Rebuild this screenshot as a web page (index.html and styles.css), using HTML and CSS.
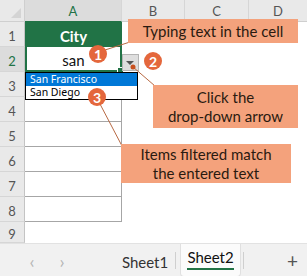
FILE: index.html
```
<!DOCTYPE html>
<html>
  <head>
    <link rel="stylesheet" href="styles.css">
  </head>
  <body>
    <div id="sheet">
      <div class="corner"><div class="cornerTri"></div></div>
      <div class="colHead selCol">A</div>
      <div class="colHead">B</div>
      <div class="colHead">C</div>
      <div class="colHead last">D</div>

      <div class="rowHead">1</div>
      <div class="cell tableHead">City</div>
      <div class="cell"></div><div class="cell"></div><div class="cell"></div>

      <div class="rowHead selRow">2</div>
      <div class="cell tableCell active">san<span class="fillHandle"></span></div>
      <div class="cell"></div><div class="cell"></div><div class="cell"></div>

      <div class="rowHead">3</div>
      <div class="cell tableCell"></div>
      <div class="cell"></div><div class="cell"></div><div class="cell"></div>

      <div class="rowHead">4</div>
      <div class="cell tableCell"></div>
      <div class="cell"></div><div class="cell"></div><div class="cell"></div>

      <div class="rowHead">5</div>
      <div class="cell tableCell"></div>
      <div class="cell"></div><div class="cell"></div><div class="cell"></div>

      <div class="rowHead">6</div>
      <div class="cell tableCell"></div>
      <div class="cell"></div><div class="cell"></div><div class="cell"></div>

      <div class="rowHead">7</div>
      <div class="cell tableCell"></div>
      <div class="cell"></div><div class="cell"></div><div class="cell"></div>

      <div class="rowHead">8</div>
      <div class="cell tableCell"></div>
      <div class="cell"></div><div class="cell"></div><div class="cell"></div>

      <div class="rowHead">9</div>
      <div class="cell"></div>
      <div class="cell"></div><div class="cell"></div><div class="cell"></div>
    </div>

    <div id="tabBar">
      <span class="nav">&#x2039;</span>
      <span class="nav">&#x203A;</span>
      <span class="sheetTab">Sheet1</span>
      <span class="tabSep"></span>
      <span class="sheetTab current"><span class="tabLabel">Sheet2</span></span>
      <span class="tabSep"></span>
      <span class="addSheet">+</span>
    </div>

    <!-- overlays: dropdown and annotations -->
    <div id="dropBtn"><span class="arrow"></span></div>
    <div id="dropList">
      <div class="item hi">San Francisco</div>
      <div class="item">San Diego</div>
    </div>

    <svg id="lines" width="307" height="276">
      <line x1="105" y1="50" x2="130" y2="42" />
      <line x1="133" y1="67" x2="155" y2="86" />
      <line x1="100" y1="104" x2="122" y2="146" />
      <circle cx="133" cy="67" r="2.5" fill="#c8501e" stroke="none" />
    </svg>

    <div class="callout" id="note1">Typing text in the cell</div>
    <div class="callout" id="note2">Click the<br>drop-down arrow</div>
    <div class="callout" id="note3">Items filtered match<br>the entered text</div>

    <div class="badge" id="badge1">1</div>
    <div class="badge" id="badge2">2</div>
    <div class="badge" id="badge3">3</div>
  </body>
</html>
```

FILE: styles.css
```
body {
  margin: 0;
  width: 307px;
  height: 276px;
  overflow: hidden;
  position: relative;
  background-color: #ffffff;
  font-family: 'Lato', 'Noto Sans', sans-serif;
}

#sheet {
  display: grid;
  grid-template-columns: 25px 97px 63px 64px 58px;
  grid-template-rows: 22px repeat(8, 25px) 21px;
}

.corner {
  background-color: #e9e9e9;
  border-right: 1px solid #cfcfcf;
  border-bottom: 1px solid #cfcfcf;
  position: relative;
}

.cornerTri {
  position: absolute;
  right: 3px;
  bottom: 3px;
  width: 0;
  height: 0;
  border-left: 10px solid transparent;
  border-bottom: 10px solid #d4d4d4;
}

.colHead {
  background-color: #e9e9e9;
  color: #555555;
  font-size: 13px;
  display: flex;
  align-items: center;
  justify-content: center;
  border-right: 1px solid #d6d6d6;
  border-bottom: 1px solid #cfcfcf;
}

.colHead.last {
  border-right: none;
}

.colHead.selCol {
  background-color: #dcdcdc;
  color: #217346;
  border-bottom: 1px solid #217346;
}

.rowHead {
  background-color: #e9e9e9;
  color: #555555;
  font-size: 13px;
  display: flex;
  align-items: center;
  justify-content: center;
  padding-top: 3px;
  border-right: 1px solid #c4c4c4;
  border-bottom: 1px solid #d6d6d6;
}

.rowHead.selRow {
  background-color: #dcdcdc;
  color: #217346;
}

.cell {
  font-size: 15px;
  color: #111111;
  display: flex;
  align-items: center;
  justify-content: center;
  position: relative;
}

.tableHead {
  background-color: #217346;
  color: #ffffff;
  font-weight: bold;
  padding-top: 3px;
}

.tableCell {
  border-bottom: 1px solid #a6a6a6;
  border-right: 1px solid #a6a6a6;
}

.cell.active {
  border: 2px solid #217346;
  border-top: none;
  padding-top: 3px;
}

.fillHandle {
  position: absolute;
  right: -4px;
  bottom: -4px;
  width: 5px;
  height: 5px;
  background-color: #217346;
  border: 1px solid #ffffff;
}

#tabBar {
  position: absolute;
  left: 0;
  top: 243px;
  width: 307px;
  height: 33px;
  background-color: #f1f1f1;
  border-top: 1px solid #e2e2e2;
  display: flex;
  align-items: center;
  font-size: 15px;
  color: #333333;
}

.nav {
  color: #b5b5b5;
  font-size: 18px;
  width: 30px;
  text-align: center;
}

.nav:first-child {
  margin-left: 17px;
}

.sheetTab {
  margin-left: 40px;
  width: 56px;
  text-align: center;
  padding-top: 3px;
}

.tabSep {
  width: 1px;
  height: 17px;
  background-color: #cfcfcf;
  margin-left: 2px;
}

.sheetTab.current {
  margin-left: 4px;
  width: 59px;
  height: 32px;
  background-color: #fbfbfb;
  border: 1px solid #e0e0e0;
  border-top: none;
  border-radius: 0 0 4px 4px;
  padding-top: 0;
  display: flex;
  align-items: flex-start;
  justify-content: center;
}

.tabLabel {
  margin-top: 4px;
  color: #111111;
  padding-bottom: 2px;
  border-bottom: 2px solid #217346;
}

.addSheet {
  margin-left: 43px;
  color: #555555;
  font-size: 19px;
}

#dropBtn {
  position: absolute;
  left: 122px;
  top: 54px;
  width: 15px;
  height: 15px;
  background-color: #dedede;
  border: 1px solid #b4b4b4;
  display: flex;
  align-items: center;
  justify-content: center;
}

.arrow {
  width: 0;
  height: 0;
  border-left: 4px solid transparent;
  border-right: 4px solid transparent;
  border-top: 4px solid #555555;
  margin-right: 2px;
}

#dropList {
  position: absolute;
  left: 25px;
  top: 72px;
  width: 111px;
  height: 26px;
  background-color: #ffffff;
  border: 1px solid #000000;
  font-family: 'Noto Sans', sans-serif;
  font-size: 10.5px;
}

.item {
  height: 13px;
  line-height: 13px;
  padding-left: 4px;
  color: #000000;
}

.item.hi {
  background-color: #0078d7;
  color: #ffffff;
}

#lines {
  position: absolute;
  left: 0;
  top: 0;
}

#lines line {
  stroke: #b86a44;
  stroke-width: 1;
}

.callout {
  position: absolute;
  background-color: #f4a27c;
  color: #2a1a10;
  font-size: 15px;
  text-align: center;
  line-height: 19px;
  display: flex;
  align-items: center;
  justify-content: center;
}

#note1 {
  left: 128px;
  top: 19px;
  width: 170px;
  height: 24px;
}

#note2 {
  left: 153px;
  top: 85px;
  width: 145px;
  height: 43px;
}

#note3 {
  left: 121px;
  top: 144px;
  width: 170px;
  height: 39px;
}

.badge {
  position: absolute;
  width: 18px;
  height: 18px;
  border-radius: 50%;
  background-color: #e4673c;
  color: #ffffff;
  font-size: 14px;
  font-weight: bold;
  display: flex;
  align-items: center;
  justify-content: center;
}

#badge1 {
  left: 89px;
  top: 45px;
}

#badge2 {
  left: 144px;
  top: 52px;
}

#badge3 {
  left: 88px;
  top: 88px;
}
```
